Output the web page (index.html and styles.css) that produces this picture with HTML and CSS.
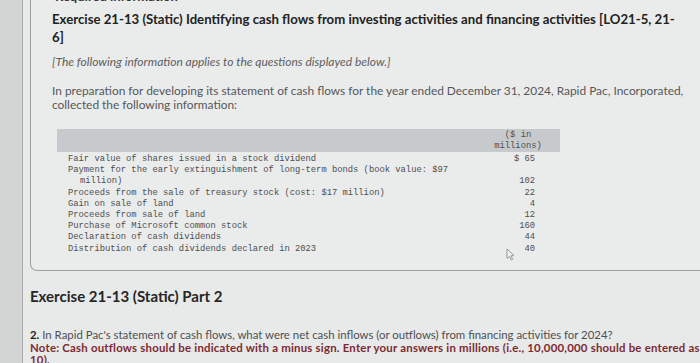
FILE: index.html
```html
<!DOCTYPE html>
<html lang="en">
<head>
<meta charset="utf-8">
<title>Exercise 21-13</title>
<link rel="stylesheet" href="styles.css">
</head>
<body>
<div class="frame">
  <div class="strip"></div>
  <main class="main">
    <section class="box">
      <div class="req">Required information</div>
      <h1 class="title">Exercise 21-13 (Static) Identifying cash flows from investing activities and financing activities [LO21-5, 21-6]</h1>
      <p class="note-it">[The following information applies to the questions displayed below.]</p>
      <p class="intro">In preparation for developing its statement of cash flows for the year ended December 31, 2024, Rapid Pac, Incorporated, collected the following information:</p>
      <div class="tablewrap">
        <table class="data">
          <thead>
            <tr><th class="desc"></th><th class="val">($ in<br>millions)</th><th class="pad"></th></tr>
          </thead>
          <tbody>
            <tr><td class="desc">Fair value of shares issued in a stock dividend</td><td class="val">$ 65</td><td class="pad"></td></tr>
            <tr><td class="desc">Payment for the early extinguishment of long-term bonds (book value: $97 million)</td><td class="val">102</td><td class="pad"></td></tr>
            <tr><td class="desc">Proceeds from the sale of treasury stock (cost: $17 million)</td><td class="val">22</td><td class="pad"></td></tr>
            <tr><td class="desc">Gain on sale of land</td><td class="val">4</td><td class="pad"></td></tr>
            <tr><td class="desc">Proceeds from sale of land</td><td class="val">12</td><td class="pad"></td></tr>
            <tr><td class="desc">Purchase of Microsoft common stock</td><td class="val">160</td><td class="pad"></td></tr>
            <tr><td class="desc">Declaration of cash dividends</td><td class="val">44</td><td class="pad"></td></tr>
            <tr><td class="desc">Distribution of cash dividends declared in 2023</td><td class="val">40</td><td class="pad"></td></tr>
          </tbody>
        </table>
        <svg class="cursor" width="9" height="13" viewBox="0 0 9 13" aria-hidden="true"><path d="M1 1 L1 10.5 L3.4 8.4 L5.2 12 L6.6 11.3 L4.9 7.8 L8 7.6 Z" fill="#f4f4f4" stroke="#8a8f94" stroke-width="0.9" stroke-linejoin="round"/></svg>
      </div>
    </section>
    <section class="part">
      <h2 class="part-title">Exercise 21-13 (Static) Part 2</h2>
      <p class="question"><b>2.</b> In Rapid Pac's statement of cash flows, what were net cash inflows (or outflows) from financing activities for 2024?<br><span class="warn">Note: Cash outflows should be indicated with a minus sign. Enter your answers in millions (i.e., 10,000,000 should be entered as 10).</span></p>
    </section>
  </main>
</div>
</body>
</html>
```
FILE: styles.css
```css
html, body {
  margin: 0;
  padding: 0;
}
body {
  width: 700px;
  height: 363px;
  overflow: hidden;
  background: #e8e9e9;
  font-family: Lato, "Liberation Sans", sans-serif;
  color: #2b2b2b;
}
.frame {
  display: flex;
  height: 363px;
}
.strip {
  width: 22px;
  flex: none;
  background: #d3d4d4;
  border-right: 1px solid #a9abac;
}
.main {
  flex: 1;
  padding-left: 7px;
  min-width: 0;
}
.box {
  border: 1px solid #9c9fa1;
  border-top: none;
  border-right: none;
  border-radius: 0 0 0 7px;
  padding: 0 0 15px 21px;
  background: #eaebeb;
}
.req {
  font-weight: 700;
  font-size: 13px;
  line-height: 14px;
  margin-top: -11px;
  padding-left: 3px;
  color: #333;
}
.title {
  margin: 8px 0 0;
  font-size: 13.2px;
  line-height: 17.5px;
  font-weight: 700;
  color: #222;
  width: 634px;
}
.note-it {
  margin: 8px 0 0;
  font-style: italic;
  font-size: 12px;
  line-height: 16px;
  color: #5d5f61;
}
.intro {
  margin: 14px 0 0;
  font-size: 11.9px;
  line-height: 14px;
  color: #55585a;
  width: 645px;
}
.tablewrap {
  position: relative;
  margin: 17px 0 0 5px;
  width: 503px;
}
.data {
  border-collapse: collapse;
  width: 503px;
  font-family: "Liberation Mono", monospace;
  font-size: 8.8px;
  color: #4c4f52;
}
.data thead th {
  background: #c6cacd;
  height: 22px;
  padding: 1px 0 0;
  font-weight: 400;
  line-height: 11px;
  vertical-align: top;
}
.data th.val {
  text-align: center;
  width: 48px;
}
.data .pad {
  width: 18px;
  padding: 0;
}
.data tbody tr:first-child td {
  padding-top: 2px;
}
.data td {
  padding: 0;
  line-height: 11.2px;
  vertical-align: bottom;
}
.data td.desc {
  padding-right: 40px;
  text-indent: -12px;
  padding-left: 23px;
}
.data td.val {
  text-align: right;
  padding-right: 7px;
}
.cursor {
  position: absolute;
  left: 449px;
  top: 119px;
}
.part {
  padding-top: 16px;
}
.part-title {
  margin: 0;
  font-size: 15px;
  line-height: 18px;
  font-weight: 700;
  color: #262626;
}
.question {
  margin: 24px 0 0;
  font-size: 11.4px;
  line-height: 12.8px;
  color: #4d5052;
  width: 684px;
}
.question b {
  color: #222;
}
.warn {
  font-weight: 700;
  letter-spacing: 0.22px;
  color: #7d2a33;
}
```
